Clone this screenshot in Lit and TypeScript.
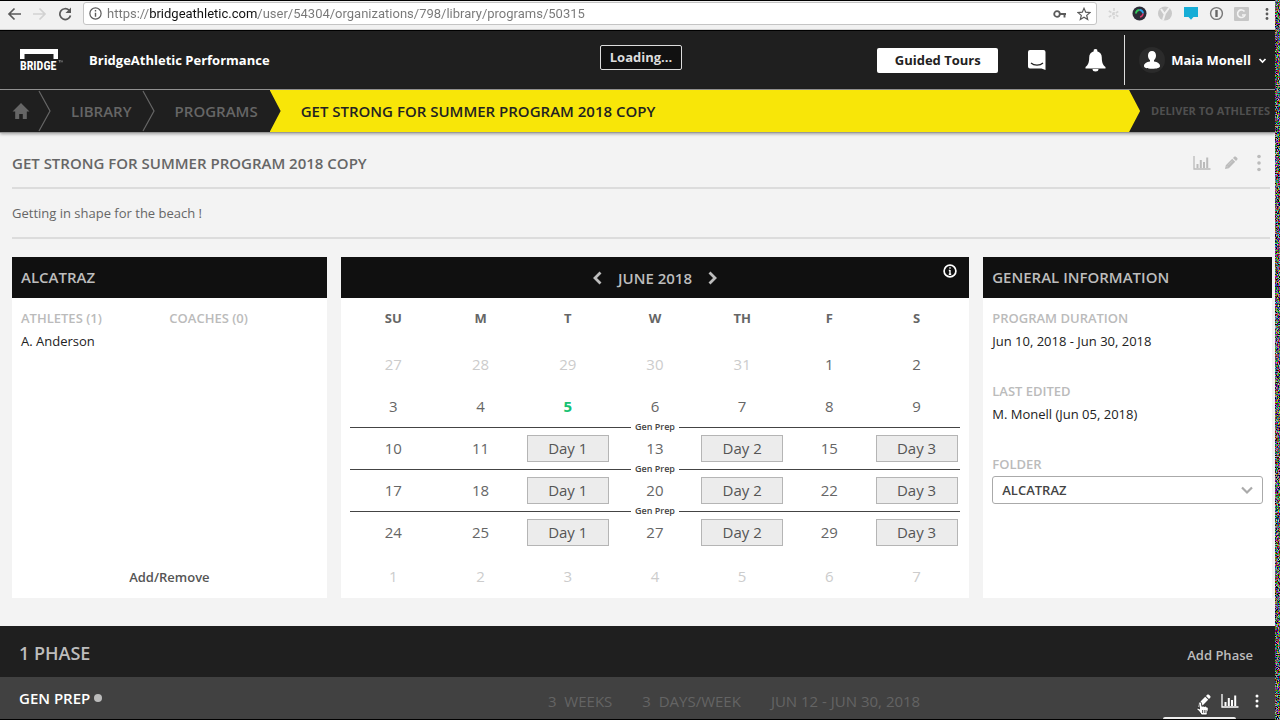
import { LitElement, html, css, svg, nothing } from "lit";
import { customElement, property } from "lit/decorators.js";
import { classMap } from "lit/directives/class-map.js";

const chartIcon = html`<svg width="18" height="16" viewBox="0 0 18 16" aria-hidden="true">
  <path d="M1 1v13h16.500" fill="none" stroke="currentColor" stroke-width="1.300"/>
  <path d="M3.500 9h2v4h-2zM6.800 5h2v8h-2zM10 7h2v6h-2zM13.200 2.500h2V13h-2z" fill="currentColor"/>
</svg>`;
const pencilIcon = html`<svg width="14" height="14" viewBox="0 0 14 14" aria-hidden="true">
  <path d="M1 13l.8-3.800L8.200 2.800l3 3L4.800 12.200zM9 2l1.200-1.200c.5-.5 1.200-.5 1.700 0l1.300 1.300c.5.5.5 1.200 0 1.700L12 5z" fill="currentColor"/>
  <path d="M2.500 10l1.500 1.500M4 9.300l4.500-4.500" stroke="#fff" stroke-opacity=".45" stroke-width=".6"/>
</svg>`;
const dotsIcon = (r: number, gap: number) => html`<svg width="16" height="20" viewBox="0 0 16 20" aria-hidden="true">
  ${[-1, 0, 1].map((i) => svg`<circle cx="8" cy=${10 + i * gap} r=${r} fill="currentColor"/>`)}
</svg>`;
const chevron = (d: string, w: number, h: number, sw: number) => html`<svg width=${w} height=${h} viewBox="0 0 ${w} ${h}" aria-hidden="true">
  <path d=${d} fill="none" stroke="currentColor" stroke-width=${sw}/>
</svg>`;

@customElement("browser-bar")
class BrowserBar extends LitElement {
  static styles = css`
    :host { display: block; }
    .bar { display: flex; align-items: center; height: 30px; padding: 0 0 3px 7px; box-sizing: border-box;
      background: #f1f1f1; border-top: 1px solid #000; border-bottom: 1px solid #cfcfcf; color: #5a5a5a; }
    .nav { display: flex; align-items: center; gap: 10px; padding-right: 10px; }
    button { display: block; border: 0; padding: 0; background: none; color: inherit; }
    svg { display: block; }
    .off { color: #d2d2d2; }
    .omni { flex: 1; display: flex; align-items: center; gap: 5px; height: 23px; padding: 0 5px; box-sizing: border-box;
      background: #fff; border: 1px solid #c4c4c4; border-radius: 3px; }
    input { flex: 1; min-width: 0; border: 0; outline: 0; padding: 0; height: 20px; font: 13px/20px Roboto, sans-serif;
      color: transparent; -webkit-background-clip: text; background-clip: text;
      background-image: linear-gradient(90deg, #777 42px, #111 42px, #111 151px, #777 151px); }
    .tools { display: flex; gap: 10px; align-items: center; }
    .ext { display: flex; align-items: center; gap: 10px; padding-left: 9px; }
  `;
  render() {
    return html`<div class="bar">
      <div class="nav">
        <button aria-label="Back"><svg width="15" height="14" viewBox="0 0 15 14"><path d="M14 7H2M7.500 1.500L2 7l5.500 5.500" fill="none" stroke="currentColor" stroke-width="1.700"/></svg></button>
        <button aria-label="Forward" class="off"><svg width="15" height="14" viewBox="0 0 15 14"><path d="M1 7h12M7.500 1.500L13 7l-5.500 5.500" fill="none" stroke="currentColor" stroke-width="1.700"/></svg></button>
        <button aria-label="Reload"><svg width="16" height="14" viewBox="0 0 16 14"><path d="M12 3.200A5.400 5.400 0 1 0 13.500 8.500" fill="none" stroke="currentColor" stroke-width="1.700"/><path d="M14 .5v5.500H8.500z" fill="currentColor"/></svg></button>
      </div>
      <div class="omni">
        <svg width="13" height="13" viewBox="0 0 13 13"><circle cx="6.500" cy="6.500" r="5.600" fill="none" stroke="currentColor" stroke-width="1.200"/><path d="M6.500 5.700v4M6.500 3v1.500" stroke="currentColor" stroke-width="1.400"/></svg>
        <input aria-label="Address" value="https://bridgeathletic.com/user/54304/organizations/798/library/programs/50315">
        <div class="tools">
          <button aria-label="Saved passwords"><svg width="14" height="12" viewBox="0 0 14 12"><circle cx="4" cy="6" r="2.800" fill="none" stroke="currentColor" stroke-width="1.800"/><path d="M6.500 6H13M11.500 6v3.500" fill="none" stroke="currentColor" stroke-width="1.900"/></svg></button>
          <button aria-label="Bookmark"><svg width="14" height="14" viewBox="0 0 14 14"><path d="M7 1.300l1.700 3.900 4.200.4-3.200 2.800 1 4.100L7 10.300l-3.700 2.200 1-4.100L1.100 5.600l4.200-.4z" fill="none" stroke="currentColor" stroke-width="1.200"/></svg></button>
        </div>
      </div>
      <div class="ext">
        <button aria-label="Snowflake"><svg width="16" height="14" viewBox="0 0 16 14"><path d="M8 1v12M2.800 4l10.400 6M2.800 10l10.400-6" stroke="#d4d4d4" stroke-width="1.500" stroke-dasharray="3 1"/></svg></button>
        <button aria-label="Camera"><svg width="15" height="15" viewBox="0 0 15 15"><circle cx="7.500" cy="7.500" r="7" fill="#2c2c38"/><path d="M4 7.500A3.500 3.500 0 0 1 7.500 4" fill="none" stroke="#33c95a" stroke-width="2"/><path d="M7.500 4A3.500 3.500 0 0 1 11 7.500" fill="none" stroke="#2aa5e8" stroke-width="2"/><path d="M11 7.500a3.500 3.500 0 0 1-3 3.400" fill="none" stroke="#d93a6a" stroke-width="1.500"/></svg></button>
        <button aria-label="Yesware"><svg width="16" height="15" viewBox="0 0 16 15"><circle cx="8" cy="7.500" r="7" fill="#c9c9c9"/><path d="M4 3l3.500 5L12 2M7.800 8L6 14" fill="none" stroke="#f1f1f1" stroke-width="2"/></svg></button>
        <button aria-label="Messages"><svg width="16" height="13" viewBox="0 0 16 13"><path d="M1 0h14v10h-4.500L8 12.800 5.500 10H1z" fill="#16add6"/></svg></button>
        <button aria-label="Password manager"><svg width="15" height="15" viewBox="0 0 15 15"><circle cx="7.500" cy="7.500" r="5.900" fill="none" stroke="#777" stroke-width="1.400"/><path d="M7.500 4v7" stroke="#666" stroke-width="2.400"/></svg></button>
        <button aria-label="Grammar"><svg width="15" height="14" viewBox="0 0 15 14"><rect width="15" height="14" rx="1" fill="#c6c6c6"/><path d="M10.500 4.500A3.800 3.800 0 1 0 11 8H8" fill="none" stroke="#f3f3f3" stroke-width="1.600"/></svg></button>
        <button aria-label="Menu">${dotsIcon(1.4, 4.5)}</button>
      </div>
    </div>`;
  }
}

@customElement("site-header")
class SiteHeader extends LitElement {
  static styles = css`
    :host { display: block; }
    header { display: grid; grid-template-columns: 1fr auto 1fr; align-items: center; height: 60px; box-sizing: border-box;
      padding: 0 7px 0 14px; background: #1f1f1f; border-top: 1px solid #000; border-bottom: 1px solid #999;
      color: #fff; font: 600 13px/18px "Open Sans", sans-serif; }
    svg { display: block; }
    .brand { display: flex; align-items: center; gap: 26px; padding-left: 6px; }
    .loading { align-self: start; margin-top: 14px; width: 80px; height: 23px; line-height: 23px; text-align: center;
      border: 1px solid #ddd; border-radius: 2px; background: #111; color: #ddd; font-weight: 700; }
    .right { display: flex; align-items: center; justify-content: flex-end; }
    .name { font-weight: 700; }
    button { border: 0; background: none; padding: 0; color: inherit; font: inherit; font-weight: 700; display: block; }
    .tour { background: #fff; color: #222; border-radius: 2px; width: 121px; height: 25px; line-height: 25px; }
    .chat { padding-left: 29px; }
    .bell { padding: 0 18px 0 38px; }
    .user { display: flex; align-items: center; gap: 6px; border-left: 1px solid #ddd; padding-left: 14px; height: 50px; }
  `;
  render() {
    return html`<header>
      <div class="brand">
        <svg width="43" height="24" viewBox="0 0 43 24" role="img" aria-label="Bridge">
          <path d="M0 1h38v10h-4.500V6h-29v5H0z" fill="#fff"/>
          <text x="0" y="22" fill="#fff" font-family="Liberation Sans Narrow, Roboto Condensed, Roboto" font-weight="700" font-size="12">BRIDGE</text>
          <path d="M38.500 12.500h2M39.500 12.500v2M41 14.500v-2l1 1 1-1v2" stroke="#aaa" stroke-width=".5" fill="none"/>
        </svg>
        <span class="name">BridgeAthletic Performance</span>
      </div>
      <div class="loading" role="status">Loading...</div>
      <div class="right">
        <button class="tour">Guided Tours</button>
        <button class="chat" aria-label="Messages"><svg width="20" height="22" viewBox="0 0 20 22"><path d="M3 1h13.500a2 2 0 0 1 2 2v18l-4-1.500H3a2 2 0 0 1-2-2V3a2 2 0 0 1 2-2z" fill="#fff"/><path d="M4 14c3 2.800 9 2.800 12 0" fill="none" stroke="#222" stroke-width="1.200"/></svg></button>
        <button class="bell" aria-label="Notifications"><svg width="21" height="23" viewBox="0 0 21 23"><path d="M10.500 0a1.800 1.800 0 0 1 1.700 2.300c3 .8 4.600 3.200 4.600 6.200 0 5 1.200 7.500 3.700 9.500v1.500H.5V18c2.500-2 3.700-4.500 3.700-9.500 0-3 1.600-5.400 4.600-6.200A1.800 1.800 0 0 1 10.500 0zM7.500 20h6a3 2.500 0 0 1-6 0z" fill="#fff"/></svg></button>
        <button class="user"><svg width="26" height="28" viewBox="0 0 26 28"><circle cx="13" cy="14" r="13" fill="#2b2b2b"/><path d="M13 5c2.500 0 4 1.800 4 4.500 0 2-.8 3.800-2 4.700v1.300c3.500.6 6 2 6 4.500 0 1.800-3 2.800-8 2.800s-8-1-8-2.800c0-2.500 2.500-3.900 6-4.500v-1.300c-1.200-.9-2-2.700-2-4.700C9 6.800 10.500 5 13 5z" fill="#fff"/></svg>
          <span>Maia Monell</span>${chevron("M2.500 2l3 3 3-3", 11, 7, 1.7)}</button>
      </div>
    </header>`;
  }
}

@customElement("crumb-bar")
class CrumbBar extends LitElement {
  static styles = css`
    :host { display: block; }
    nav { display: flex; height: 43px; box-sizing: border-box; background: #1f1f1f; border-bottom: 1px solid #999;
      box-shadow: 0 1px 3px rgba(0,0,0,.35); font: 600 15px/42px "Open Sans", sans-serif; }
    a { color: #666; text-decoration: none; display: flex; align-items: center; }
    svg { display: block; }
    .home { padding: 0 8px 0 12px; }
    .arrow { color: #666; }
    .crumb { padding: 0 10px 0 19px; }
    .last { padding-right: 12px; }
    .current { flex: 1; background: #f8e608; color: #222; padding-left: 31px;
      clip-path: polygon(0 0, calc(100% - 11px) 0, 100% 50%, calc(100% - 11px) 100%, 0 100%, 11px 50%); }
    .deliver { font-size: 11px; font-weight: 700; color: #4f4f4f; padding: 0 5px 0 11px; }
  `;
  render() {
    const sep = html`<svg class="arrow" width="14" height="42" viewBox="0 0 14 42" aria-hidden="true"><path d="M1 1l11 20L1 41" fill="none" stroke="currentColor" stroke-width="1.200"/></svg>`;
    return html`<nav aria-label="Breadcrumb">
      <a class="home" href="#home" aria-label="Home"><svg width="18" height="16" viewBox="0 0 18 16"><path d="M9 0l8.500 8.500h-2.700V16h-4v-5H7.200v5h-4V8.500H.5z" fill="#666"/></svg></a>${sep}
      <a class="crumb" href="#library">LIBRARY</a>${sep}
      <a class="crumb last" href="#programs">PROGRAMS</a>
      <a class="current" href="#program" aria-current="page">GET STRONG FOR SUMMER PROGRAM 2018 COPY</a>
      <a class="deliver" href="#deliver">DELIVER TO ATHLETES</a>
    </nav>`;
  }
}

type Cell = { text: string; kind?: "out" | "today" | "day" };
const week = (texts: string, kind?: Cell["kind"]): Cell[] => texts.split(",").map((t) => ({ text: t, kind: t.startsWith("Day") ? "day" : kind }));
const weeks: { cells: Cell[]; phase?: string }[] = [
  { cells: [...week("27,28,29,30,31", "out"), ...week("1,2")] },
  { cells: [...week("3,4"), { text: "5", kind: "today" }, ...week("6,7,8,9")] },
  { cells: week("10,11,Day 1,13,Day 2,15,Day 3"), phase: "Gen Prep" },
  { cells: week("17,18,Day 1,20,Day 2,22,Day 3"), phase: "Gen Prep" },
  { cells: week("24,25,Day 1,27,Day 2,29,Day 3"), phase: "Gen Prep" },
  { cells: week("1,2,3,4,5,6,7", "out") },
];

@customElement("month-calendar")
class MonthCalendar extends LitElement {
  static styles = css`
    :host { display: block; background: #fff; }
    .top { position: relative; display: flex; align-items: center; justify-content: center; gap: 16px; height: 41px;
      background: #101010; color: #bdbdbd; font: 600 15px/20px "Open Sans", sans-serif; }
    h2 { font: inherit; margin: 0; }
    button { border: 0; background: none; padding: 0; color: inherit; font: inherit; }
    svg { display: block; }
    .info { position: absolute; top: 7px; right: 12px; color: #fff; }
    .body { padding: 0 9px; }
    table { width: 100%; table-layout: fixed; border-collapse: collapse; font: 15px/20px "Open Sans", sans-serif; color: #666; }
    th { height: 45px; padding: 10px 0 0; box-sizing: border-box; vertical-align: top; font-size: 13px; font-weight: 700; color: #666; }
    td { position: relative; height: 42px; padding: 0; text-align: center; box-sizing: border-box; }
    .phase td { border-top: 1px solid #444; }
    .tail td { height: 45px; }
    .out { color: #ccc; }
    .today { color: #16c172; font-weight: 700; }
    .session { width: 82px; max-width: 100%; height: 27px; background: #ececec; border: 1px solid #b5b5b5; color: #555; }
    .label { position: absolute; top: -8px; left: 50%; transform: translateX(-50%); padding: 0 4px; background: #fff;
      font-size: 9px; line-height: 14px; font-weight: 600; color: #444; white-space: nowrap; }
  `;
  render() {
    return html`
      <div class="top">
        <button aria-label="Previous month">${chevron("M8.500 1.500L3 7l5.500 5.500", 10, 14, 2.8)}</button>
        <h2>JUNE 2018</h2>
        <button aria-label="Next month">${chevron("M1.500 1.500L7 7l-5.500 5.500", 10, 14, 2.8)}</button>
        <button class="info" aria-label="Calendar information"><svg width="14" height="14" viewBox="0 0 14 14"><circle cx="7" cy="7" r="5.900" fill="none" stroke="#fff" stroke-width="1.700"/><path d="M7 6v4.500M7 3.300v1.500M5.800 6.500H7M5.800 10.300h2.400" stroke="#fff" stroke-width="1.400"/></svg></button>
      </div>
      <div class="body"><table>
        <thead><tr>${["SU", "M", "T", "W", "TH", "F", "S"].map((d) => html`<th scope="col">${d}</th>`)}</tr></thead>
        <tbody>${weeks.map((w, r) => html`<tr class=${classMap({ phase: !!w.phase, tail: r === 5 })}>
          ${w.cells.map((c, i) => html`<td class=${c.kind ?? "plain"}>${c.kind === "day" ? html`<button class="session">${c.text}</button>` : c.text}${w.phase && i === 3 ? html`<span class="label">${w.phase}</span>` : nothing}</td>`)}
        </tr>`)}</tbody>
      </table></div>`;
  }
}

@customElement("info-panel")
class InfoPanel extends LitElement {
  @property() heading = "";
  static styles = css`
    :host { display: flex; flex-direction: column; background: #fff; }
    h2 { margin: 0; padding: 0 9px; height: 41px; background: #101010; color: #bdbdbd; font: 600 15px/41px "Open Sans", sans-serif; }
    .body { flex: 1; display: flex; flex-direction: column; padding: 10px 9px 11px; }
  `;
  render() {
    return html`<h2>${this.heading}</h2><div class="body"><slot></slot></div>`;
  }
}

@customElement("app-root")
class AppRoot extends LitElement {
  static styles = css`
    :host { display: grid; grid-template-columns: 1fr 5px; min-height: 100vh; background: #f3f3f3; overflow: hidden;
      font: 13px/20px "Open Sans", sans-serif; color: #222; }
    .noise { display: block; width: 5px; height: 100%; background: #000; }
    .page { display: flex; flex-direction: column; min-width: 0; }
    svg { display: block; }
    button { border: 0; background: none; padding: 0; color: inherit; font: inherit; display: block; }
    .program { flex: 1; display: flex; flex-direction: column; padding: 0 3px 28px 12px; }
    .title { display: flex; align-items: center; justify-content: space-between; height: 54px; margin-right: 2px;
      border-bottom: 2px solid #dcdcdc; color: #666; }
    h1 { margin: 0; padding-top: 6px; font-size: 15px; font-weight: 600; }
    .actions { display: flex; align-items: center; gap: 13px; padding: 6px 3px 0 0; color: #bbb; }
    .about { margin: 0 2px 18px 0; height: 48px; line-height: 48px; border-bottom: 2px solid #dcdcdc; color: #666; }
    .panels { flex: 1; display: grid; grid-template-columns: 315fr 629fr 289fr; gap: 14px; }
    .roster { display: grid; grid-template-columns: 1fr 1fr; }
    h3, label { margin: 0; display: block; font-size: 13px; line-height: 20px; font-weight: 600; color: #bbb; }
    p { margin: 0; }
    .value { padding-top: 3px; }
    .manage { margin: auto auto 0; font-weight: 600; color: #555; }
    .facts { display: flex; flex-direction: column; gap: 30px; }
    .pick { position: relative; margin-top: 2px; }
    .pick svg { position: absolute; right: 10px; top: 10px; color: #aaa; }
    select { appearance: none; display: block; width: 100%; height: 28px; padding: 0 9px; border: 1px solid #aaa; border-radius: 3px;
      background: #fff; color: #444; font: 600 13px/20px "Open Sans", sans-serif; }
    .phases { display: flex; align-items: center; justify-content: space-between; height: 51px; padding: 2px 22px 0 19px;
      background: #1f1f1f; color: #bdbdbd; box-sizing: border-box; }
    h2 { margin: 0; font-size: 18px; line-height: 24px; font-weight: 600; }
    .add { font-weight: 600; padding-top: 4px; }
    .phase { position: relative; display: grid; grid-template-columns: 529fr 717fr; align-items: center; height: 43px; box-sizing: border-box;
      padding: 0 10px 0 19px; background: #414141; border-bottom: 1px solid #000; color: #fff; }
    .phase h3 { display: flex; align-items: center; gap: 4px; color: #fff; font-size: 15px; font-weight: 600; }
    .dot { width: 8px; height: 8px; border-radius: 50%; background: #bbb; }
    .meta { display: flex; justify-content: space-between; align-items: center; padding-top: 5px; }
    .stats { display: flex; gap: 30px; font-size: 15px; color: #646464; white-space: pre; }
    .tools { display: flex; align-items: center; gap: 10px; }
    .cursor { position: absolute; right: 65px; bottom: 3px; }
    .tip { position: absolute; right: 39px; bottom: 0; width: 73px; height: 2px; background: #eee; border-radius: 2px 2px 0 0; }
  `;
  render() {
    return html`
      <div class="page">
        <browser-bar></browser-bar>
        <site-header></site-header>
        <crumb-bar></crumb-bar>
        <main class="program">
          <div class="title"><h1>GET STRONG FOR SUMMER PROGRAM 2018 COPY</h1>
            <div class="actions">
              <button aria-label="Statistics">${chartIcon}</button>
              <button aria-label="Edit program">${pencilIcon}</button>
              <button aria-label="More">${dotsIcon(1.8, 6.5)}</button>
            </div>
          </div>
          <p class="about">Getting in shape for the beach !</p>
          <div class="panels">
            <info-panel heading="ALCATRAZ">
              <div class="roster">
                <div><h3>ATHLETES (1)</h3><p class="value">A. Anderson</p></div>
                <div><h3>COACHES (0)</h3></div>
              </div>
              <button class="manage">Add/Remove</button>
            </info-panel>
            <month-calendar></month-calendar>
            <info-panel heading="GENERAL INFORMATION">
              <div class="facts">
                <div><h3>PROGRAM DURATION</h3><p class="value">Jun 10, 2018 - Jun 30, 2018</p></div>
                <div><h3>LAST EDITED</h3><p class="value">M. Monell (Jun 05, 2018)</p></div>
                <div><label for="folder">FOLDER</label>
                  <div class="pick"><select id="folder"><option>ALCATRAZ</option></select>${chevron("M1 1.500l5 5 5-5", 12, 9, 2.2)}</div></div>
              </div>
            </info-panel>
          </div>
        </main>
        <section>
          <div class="phases"><h2>1 PHASE</h2><button class="add">Add Phase</button></div>
          <div class="phase">
            <h3>GEN PREP<span class="dot"></span></h3>
            <div class="meta">
              <div class="stats"><span>3  WEEKS</span><span>3  DAYS/WEEK</span><span>JUN 12 - JUN 30, 2018</span></div>
              <div class="tools">
                <button aria-label="Edit phase">${pencilIcon}</button>
                <button aria-label="Phase statistics">${chartIcon}</button>
                <button aria-label="More">${dotsIcon(1.5, 5)}</button>
              </div>
            </div>
            <svg class="cursor" width="14" height="15" viewBox="0 0 14 15" aria-hidden="true"><path d="M4 1c1 0 1.400.6 1.500 1.300l.4 3 1.100-.5 1.300.6 1.200-.3 1.100.8 1.300.2c.8 2 .3 3.500-.4 5L11 14H5.500L3.300 10.800.8 8.200c0-1.200 1.200-1.300 2-.6L3.500 8 2.700 2.300C2.600 1.500 3.200 1 4 1z" fill="#fff" stroke="#222" stroke-width=".9"/><path d="M6.500 9v3M8.300 9v3M10 9v3" stroke="#222" stroke-width=".7"/></svg>
            <span class="tip"></span>
          </div>
        </section>
      </div>
      <svg class="noise" aria-hidden="true">
        <filter id="grain" x="0" y="0" width="100%" height="100%"><feTurbulence type="fractalNoise" baseFrequency=".9" numOctaves="2" seed="4"/>
          <feColorMatrix values="2.500 0 0 0 -1.100  0 2.500 0 0 -1.100  0 0 2.500 0 -1.100  0 0 0 0 1"/></filter>
        <rect width="100%" height="100%" filter="url(#grain)"/>
      </svg>`;
  }
}
